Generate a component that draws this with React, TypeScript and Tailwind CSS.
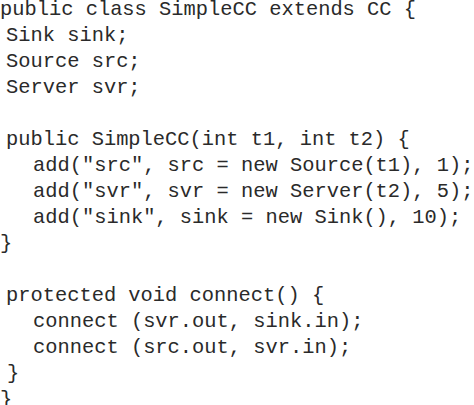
const lines: { text: string; indent: string }[] = [
  { text: "public class SimpleCC extends CC {", indent: "pl-0" },
  { text: "Sink sink;", indent: "pl-[6px]" },
  { text: "Source src;", indent: "pl-[6px]" },
  { text: "Server svr;", indent: "pl-[6px]" },
  { text: "", indent: "pl-0" },
  { text: "public SimpleCC(int t1, int t2) {", indent: "pl-[6px]" },
  { text: 'add("src", src = new Source(t1), 1);', indent: "pl-[33px]" },
  { text: 'add("svr", svr = new Server(t2), 5);', indent: "pl-[33px]" },
  { text: 'add("sink", sink = new Sink(), 10);', indent: "pl-[33px]" },
  { text: "}", indent: "pl-0" },
  { text: "", indent: "pl-0" },
  { text: "protected void connect() {", indent: "pl-[6px]" },
  { text: "connect (svr.out, sink.in);", indent: "pl-[33px]" },
  { text: "connect (src.out, svr.in);", indent: "pl-[33px]" },
  { text: "}", indent: "pl-[7px]" },
  { text: "}", indent: "pl-0" },
];

export default function App() {
  return (
    <div className="w-[474px] h-[405px] overflow-hidden bg-white">
      {/* code listing */}
      <pre className="-mt-[3px] font-['Courier_New','Nimbus_Mono_PS','FreeMono','Liberation_Mono',monospace] text-[20.4px] leading-[26px] text-[#2a2a2a]">
        {lines.map((line, idx) => (
          <div key={idx} className={`${line.indent} h-[26px] whitespace-pre`}>
            {line.text}
          </div>
        ))}
      </pre>
    </div>
  );
}
